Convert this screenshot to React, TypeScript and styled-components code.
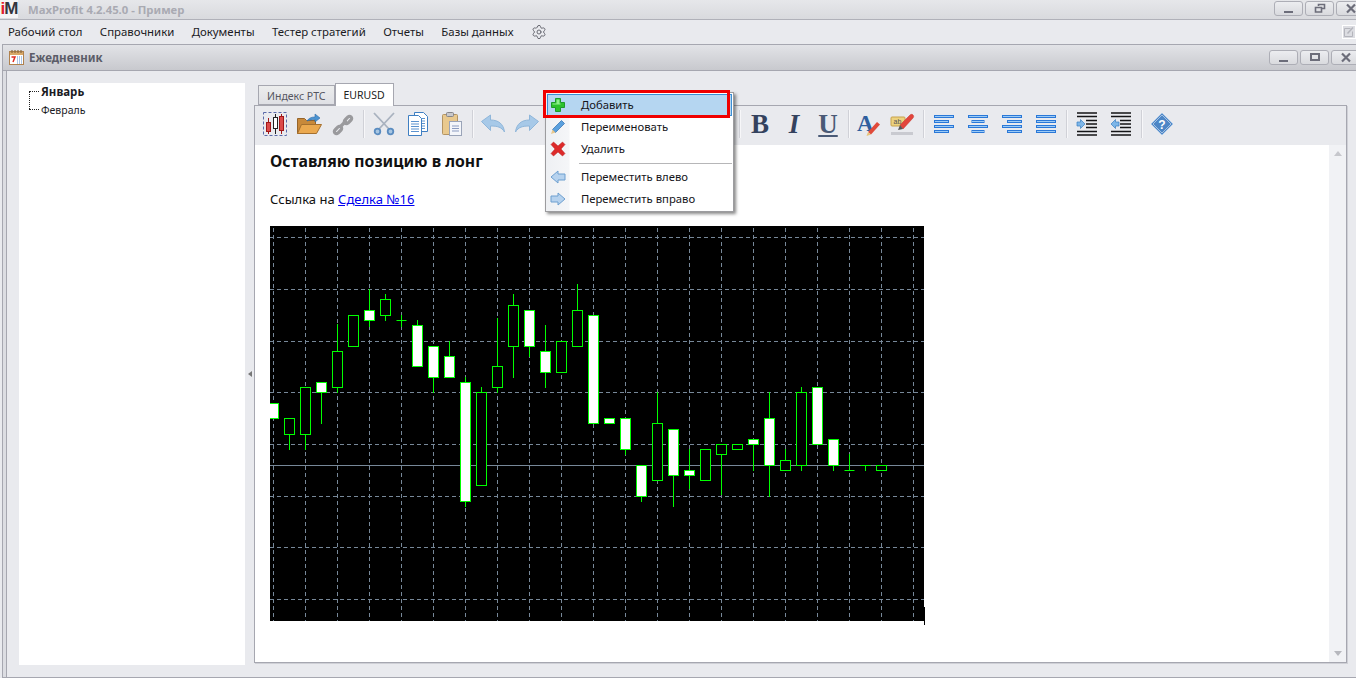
import * as React from "react";
import styled, { createGlobalStyle } from "styled-components";
import { Settings } from "lucide-react";

const UI_FONT = `"Noto Sans", "Open Sans", sans-serif`;
const BORDER = "#a6a7b0";
const GREEN = "#00ff00";
const GRID = "#778899";

const GlobalStyle = createGlobalStyle`
  html, body { margin: 0; padding: 0; background: #e9eaee; }
  * { box-sizing: border-box; }
`;

const Root = styled.div`
  position: relative;
  width: 1356px;
  height: 678px;
  display: flex;
  flex-direction: column;
  overflow: hidden;
  background: #e9eaee;
  font-family: ${UI_FONT};
  color: #1b1b1f;
`;

const TitleBar = styled.div`
  height: 20px;
  flex: none;
  display: flex;
  align-items: flex-start;
  border-bottom: 1px solid #b0b1b9;
  background: linear-gradient(#e6e7ea, #d9dade);
`;

const Logo = styled.div`
  width: 18px;
  height: 18px;
  flex: none;
  display: flex;
  justify-content: center;
  align-items: center;
  background: #f4f4f5;
  font: bold 17px/18px "Liberation Sans", sans-serif;
  letter-spacing: -1px;
`;

const LogoI = styled.span`
  color: #e2202c;
`;

const LogoM = styled.span`
  color: #33363f;
`;

const AppTitle = styled.div`
  margin-left: 10px;
  font-size: 11.3px;
  font-weight: 700;
  line-height: 19px;
  color: #a9aab2;
  flex: 1;
`;

const CaptionButtons = styled.div<{ $pad: number; $bleed: number }>`
  display: flex;
  flex: none;
  gap: 2px;
  padding-top: ${(p) => p.$pad}px;
  margin-right: -${(p) => p.$bleed}px;
`;

const CaptionButton = styled.div`
  width: 29px;
  height: 15px;
  flex: none;
  display: flex;
  align-items: center;
  justify-content: center;
  border: 1px solid #adaeb6;
  border-radius: 3px;
  background: linear-gradient(#ecedf0, #d9dade);
`;

const MenuBar = styled.div`
  height: 24px;
  flex: none;
  display: flex;
  align-items: center;
  gap: 17.4px;
  padding-left: 8px;
  font-size: 11.4px;
`;

const MenuEntry = styled.span`
  line-height: 24px;
  white-space: nowrap;
`;

const GearSlot = styled.span`
  display: flex;
  color: #62636c;
`;

const DockNote = styled.span`
  display: flex;
  margin-left: auto;
  width: 14px;
  height: 14px;
  border: 1px solid #fff;
  background: #dcdde2;
`;

const Window = styled.div`
  flex: 1;
  min-height: 0;
  margin-left: 2px;
  display: flex;
  flex-direction: column;
  border-top: 1px solid ${BORDER};
  border-left: 1px solid ${BORDER};
  border-bottom: 1px solid ${BORDER};
  background: #dcdde2;
`;

const WindowTitle = styled.div`
  height: 26px;
  flex: none;
  display: flex;
  align-items: flex-start;
  padding-left: 6px;
  border-bottom: 1px solid ${BORDER};
  background: linear-gradient(#e2e3e7, #c8c9ce);
`;

const WindowIcon = styled.span`
  display: flex;
  margin-top: 4px;
  flex: none;
`;

const WindowName = styled.span`
  flex: 1;
  margin-left: 4px;
  font-size: 11.5px;
  font-weight: 700;
  line-height: 25px;
  color: #5b5c68;
`;

const WindowBody = styled.div`
  flex: 1;
  min-height: 0;
  margin-left: 3px;
  display: flex;
  padding: 12px 9px 12px 12px;
  border-left: 1px solid ${BORDER};
  background: #e9eaee;
`;

const TreePanel = styled.div`
  width: 226px;
  flex: none;
  padding: 0 0 0 10px;
  background: #fff;
`;

const TreeList = styled.div`
  position: relative;
  margin-top: -1px;
  &::before {
    content: "";
    position: absolute;
    left: 0;
    top: 9px;
    height: 18px;
    border-left: 1px dotted #222;
  }
`;

const TreeNode = styled.div<{ $bold?: boolean }>`
  display: flex;
  align-items: center;
  height: 18px;
  padding-top: ${(p) => (p.$bold ? 0 : 1)}px;
  font-size: ${(p) => (p.$bold ? 11.5 : 10.5)}px;
  font-weight: ${(p) => (p.$bold ? 700 : 400)};
  &::before {
    content: "";
    width: 10px;
    margin-right: 2px;
    border-top: 1px dotted #222;
  }
`;

const Splitter = styled.div`
  width: 9px;
  flex: none;
  display: flex;
  align-items: center;
  justify-content: center;
  &::before {
    content: "";
    border-style: solid;
    border-width: 3px 4px 3px 0;
    border-color: transparent #777 transparent transparent;
  }
`;

const Editor = styled.div`
  flex: 1;
  min-width: 0;
  display: flex;
  flex-direction: column;
  margin-bottom: 2px;
`;

const TabRow = styled.div`
  height: 22px;
  flex: none;
  display: flex;
  align-items: flex-end;
  padding-left: 4px;
`;

const Tab = styled.div<{ $active?: boolean }>`
  height: ${(p) => (p.$active ? 23 : 20)}px;
  margin-bottom: ${(p) => (p.$active ? -1 : 0)}px;
  padding: 0 8px;
  position: relative;
  border: 1px solid ${BORDER};
  border-bottom: ${(p) => (p.$active ? "none" : `1px solid ${BORDER}`)};
  background: ${(p) => (p.$active ? "#fff" : "linear-gradient(#eceded, #dfe0e5)")};
  color: ${(p) => (p.$active ? "#222" : "#55565f")};
  font-size: 10.5px;
  line-height: ${(p) => (p.$active ? 23 : 20)}px;
  white-space: nowrap;
`;

const Panel = styled.div`
  flex: 1;
  min-height: 0;
  display: flex;
  flex-direction: column;
  border: 1px solid ${BORDER};
  box-shadow: 1px 1px 0 #cfd0d6;
`;

const Toolbar = styled.div`
  height: 39px;
  flex: none;
  display: flex;
  align-items: center;
  padding: 0 0 3px 3px;
  background: #e9eaee;
`;

const ToolButton = styled.div`
  width: 34px;
  height: 34px;
  flex: none;
  display: flex;
  align-items: center;
  justify-content: center;
`;

const ToolSep = styled.div`
  width: 1px;
  height: 28px;
  flex: none;
  margin: 0 3px;
  background: #d0d1d7;
  box-shadow: 1px 0 0 #f7f7f9;
`;

const ToolGap = styled.div`
  width: 192px;
  flex: none;
`;

const Letter = styled.span<{ $italic?: boolean; $under?: boolean }>`
  font-family: "Liberation Serif", serif;
  font-weight: 700;
  font-size: 27px;
  line-height: 28px;
  color: ${(p) => (p.$under ? "#4a5a76" : "#34425e")};
  font-style: ${(p) => (p.$italic ? "italic" : "normal")};
  text-decoration: ${(p) => (p.$under ? "underline" : "none")};
  text-decoration-thickness: 2px;
  text-underline-offset: 2px;
`;

const Content = styled.div`
  flex: 1;
  min-height: 0;
  display: flex;
  background: #fff;
`;

const Doc = styled.div`
  flex: 1;
  min-width: 0;
  padding: 5px 0 0 15px;
`;

const Heading = styled.h1`
  margin: 0;
  font-size: 15.8px;
  font-weight: 700;
  line-height: 22px;
  color: #111;
`;

const Para = styled.p`
  margin: 18px 0 18px;
  font-size: 13px;
  line-height: 18px;
  color: #111;
`;

const DocLink = styled.a`
  color: #0000ee;
  text-decoration: underline;
`;

const Scrollbar = styled.div`
  width: 17px;
  flex: none;
  display: flex;
  flex-direction: column;
  justify-content: space-between;
  align-items: center;
  padding: 6px 0;
  background: #f1f2f5;
`;

const ScrollArrow = styled.span<{ $down?: boolean }>`
  width: 0;
  height: 0;
  border-left: 4px solid transparent;
  border-right: 4px solid transparent;
  ${(p) => (p.$down ? "border-top: 5px solid #b6b7bd;" : "border-bottom: 5px solid #c6c7cc;")}
`;

const Menu = styled.div`
  position: absolute;
  left: 545px;
  top: 92px;
  width: 189px;
  padding: 1px;
  border: 1px solid #9c9c9f;
  background: linear-gradient(90deg, #eef0f3 0, #f5f6f8 23px, #fff 24px);
  box-shadow: 2px 2px 3px rgba(40, 40, 40, 0.55);
  font-size: 11.3px;
`;

const MenuItem = styled.div<{ $active?: boolean }>`
  height: 22px;
  display: flex;
  align-items: center;
  border: 1px solid ${(p) => (p.$active ? "#3b8ed4" : "transparent")};
  background: ${(p) => (p.$active ? "#b5d6f1" : "transparent")};
  color: #15151a;
`;

const MenuLabel = styled.span`
  line-height: 18px;
  padding-bottom: 1px;
`;

const MenuIcon = styled.span`
  width: 33px;
  flex: none;
  display: flex;
  justify-content: center;
  padding-right: 13px;
`;

const MenuDivider = styled.div`
  height: 1px;
  margin: 3px 0 2px 32px;
  background: #b6b6b8;
`;

const RedFrame = styled.div`
  position: absolute;
  left: -3px;
  top: -3px;
  width: 187px;
  height: 28px;
  border: 3px solid #f00000;
  pointer-events: none;
`;

/* ---- drawings ---- */

const CaptionGlyph = ({ kind }: { kind: "min" | "max" | "restore" | "close" }) => (
  <svg width="14" height="11" viewBox="0 0 14 11" fill="none" stroke="#6c6d7a">
    {kind === "min" && <path d="M2 9h9" strokeWidth="2" />}
    {kind === "max" && <rect x="3" y="2" width="8" height="6" strokeWidth="2" />}
    {kind === "restore" && (
      <path d="M5.5 3V1.5h6v4H9M2.5 4.5h6v4.500h-6z" strokeWidth="1.6" />
    )}
    {kind === "close" && <path d="M3 1.500l8 8M11 1.500l-8 8" strokeWidth="2.200" />}
  </svg>
);

const NoteGlyph = () => (
  <svg width="12" height="12" viewBox="0 0 12 12" fill="none" stroke="#b4b5bc">
    <path d="M1.500 2.500h6M1.500 2.500v8h8v-5" />
    <path d="M4.500 7.500L10 1.500" strokeWidth="1.500" />
  </svg>
);

const CalendarIcon = () => (
  <svg width="16" height="16" viewBox="0 0 16 16">
    <rect x="0.500" y="2.500" width="14" height="13" fill="#fff" stroke="#b0814d" />
    <rect x="1" y="3" width="13" height="3" fill="#d8a868" />
    <path d="M3 1v3M6 1v3M9 1v3M12 1v3" stroke="#8a6a40" strokeWidth="1.200" />
    <path d="M2.500 8h3.500l-2 5" stroke="#e02a20" strokeWidth="1.500" fill="none" />
    <path d="M8 8h5M8 10h5M8 12h5M8 14h5" stroke="#5b8fd0" strokeDasharray="1 1" />
  </svg>
);

const CandlesIcon = () => (
  <svg width="26" height="26" viewBox="0 0 26 26">
    <rect x="1.500" y="1.500" width="23" height="23" fill="none" stroke="#5a6aa8" strokeDasharray="3 2" />
    <path d="M6.500 7v16" stroke="#a01818" />
    <rect x="4.500" y="11.500" width="4" height="9" fill="#dc4a4a" stroke="#a01818" />
    <path d="M13.500 3v20" stroke="#222" />
    <rect x="11.500" y="6.500" width="4" height="11" fill="#fff" stroke="#222" />
    <path d="M19.500 3v20" stroke="#a01818" />
    <rect x="17.500" y="5.500" width="4" height="14" fill="#dc4a4a" stroke="#a01818" />
  </svg>
);

const FolderIcon = () => (
  <svg width="26" height="26" viewBox="0 0 26 26">
    <path d="M1.500 7.500h7l2 2h9v13h-18z" fill="#c8893a" stroke="#96642a" />
    <path d="M1.500 22.500l4-9h20l-5 9z" fill="#eba94f" stroke="#a5702f" />
    <path d="M11 10c2-3 4-4 8-4V3l5 4-5 4V8.500c-3 0-5 .5-8 1.500z" fill="#4b93d1" stroke="#2d6ca8" strokeWidth="0.600" />
  </svg>
);

const LinkIcon = () => (
  <svg width="26" height="26" viewBox="0 0 26 26" fill="none">
    <g stroke="#9a9a9d" strokeWidth="3.200" strokeLinecap="round">
      <path d="M5 19l3-3a2 2 0 0 1 3 0l0 0a2 2 0 0 1 0 3l-3 3a2 2 0 0 1-3 0a2 2 0 0 1 0-3z" />
      <path d="M15 9l3-3a2 2 0 0 1 3 0l0 0a2 2 0 0 1 0 3l-3 3a2 2 0 0 1-3 0a2 2 0 0 1 0-3z" />
      <path d="M10.500 15.500l5-5" />
    </g>
  </svg>
);

const ScissorsIcon = () => (
  <svg width="26" height="26" viewBox="0 0 26 26" fill="none">
    <path d="M3 2l15 16M23 2L8 18" stroke="#a9b2bf" strokeWidth="1.800" />
    <circle cx="6.500" cy="20.500" r="2.800" fill="#a8c6e2" stroke="#5a8cc0" strokeWidth="1.800" />
    <circle cx="19.500" cy="20.500" r="2.800" fill="#a8c6e2" stroke="#5a8cc0" strokeWidth="1.800" />
  </svg>
);

const DocLines = ({ x, y, n, w }: { x: number; y: number; n: number; w: number }) => (
  <path
    d={Array.from({ length: n }, (_, i) => `M${x} ${y + i * 2.5}h${w}`).join("")}
    stroke="#5c93cf"
  />
);

const CopyIcon = () => (
  <svg width="26" height="26" viewBox="0 0 26 26">
    <path d="M9.500 1.500h9l4 4v15h-13z" fill="#fff" stroke="#3f7fc2" />
    <DocLines x={12} y={7.500} n={5} w={8} />
    <path d="M3.500 4.500h10l3 3v17h-13z" fill="#fff" stroke="#3f7fc2" />
    <DocLines x={6} y={10.500} n={5} w={8} />
  </svg>
);

const PasteIcon = () => (
  <svg width="26" height="26" viewBox="0 0 26 26">
    <rect x="3.500" y="3.500" width="15" height="20" rx="1" fill="#e9c98e" stroke="#b39463" />
    <rect x="7.500" y="1.500" width="7" height="4" rx="1" fill="#c9c9cc" stroke="#85858a" />
    <rect x="10.500" y="10.500" width="12" height="14" fill="#f4f6fa" stroke="#9aa4b8" />
    <path d="M13 15h7M13 17.500h7M13 20h7" stroke="#8b9bc0" />
  </svg>
);

const TurnArrow = ({ flip }: { flip?: boolean }) => (
  <svg width="26" height="26" viewBox="0 0 26 26">
    <path
      d="M1.500 10.500L10.500 4v5c8 0 13 4 14 12-3-5-7-6-14-6v4.500z"
      fill="#a7c9e8"
      stroke="#8fb6da"
      transform={flip ? "matrix(-1 0 0 1 26 0)" : undefined}
    />
  </svg>
);

const FontColorIcon = () => (
  <svg width="26" height="26" viewBox="0 0 26 26" overflow="visible">
    <text x="1" y="20" fontFamily="Liberation Serif, serif" fontWeight="700" fontSize="23" fill="#2f5f9e">A</text>
    <path d="M12 21l9-10 3 2.500-9 10z" fill="#e04a3a" />
    <path d="M10.500 25l1.500-4 3 2.500z" fill="#e7c27a" />
  </svg>
);

const MarkerIcon = () => (
  <svg width="26" height="26" viewBox="0 0 26 26">
    <rect x="1" y="6" width="14" height="9" rx="1" fill="#ecd27f" stroke="#c7a24d" />
    <text x="3.500" y="13" fontFamily="Liberation Sans, sans-serif" fontSize="7" fill="#555">ab</text>
    <path d="M10 14L20 4c2-2 5 1 3 3L13 18z" fill="#e2453c" stroke="#c4302a" strokeWidth="0.500" />
    <path d="M8 19l2-5 3 4z" fill="#555" />
    <rect x="1" y="21" width="22" height="3" fill="#c9cad0" />
  </svg>
);

const AlignIcon = ({ mode }: { mode: "left" | "center" | "right" | "full" }) => {
  const short = mode === "full" ? 20 : mode === "center" ? 13 : 15;
  const bar = (y: number, w: number) => {
    const x = mode === "left" || mode === "full" ? 2 : mode === "right" ? 22 - w : 12 - w / 2;
    return <rect key={y} x={x + 0.5} y={y + 0.5} width={w - 1} height={2} fill="#9ccbf6" stroke="#2a78d8" />;
  };
  return (
    <svg width="24" height="24" viewBox="0 0 24 24">
      {[3, 8, 13, 18].map((y, i) => bar(y, i % 2 ? short : 20))}
    </svg>
  );
};

const IndentIcon = ({ out }: { out?: boolean }) => (
  <svg width="24" height="26" viewBox="0 0 24 26">
    <path d="M2 2h20M2 5.500h20M11 9.500h11M11 13h11M11 16.500h11M2 20.500h20M2 24h20" stroke="#141416" strokeWidth="1.500" />
    <path
      d={out ? "M2 13l4.500-4.500v2.500H10v4H6.500v2.500z" : "M10 13L5.500 8.500V11H2v4h3.500v2.500z"}
      fill="#7db6e8"
      stroke="#3a7fc2"
      strokeWidth="0.700"
    />
  </svg>
);

const HelpIcon = () => (
  <svg width="24" height="24" viewBox="0 0 24 24">
    <path d="M12 1l11 11-11 11L1 12z" fill="#4d86c6" stroke="#a5c4e6" />
    <path d="M12 3l9 9-9 9-9-9z" fill="none" stroke="#e0e9f4" strokeWidth="0.600" />
    <text x="12" y="16.500" textAnchor="middle" fontFamily="Liberation Sans, sans-serif" fontWeight="700" fontSize="12" fill="#fff">?</text>
  </svg>
);

const PlusIcon = () => (
  <svg width="16" height="16" viewBox="0 0 16 16">
    <path d="M5.500 1.500h5v4h4v5h-4v4h-5v-4h-4v-5h4z" fill="#2cc12c" stroke="#1d9a2a" />
    <path d="M6.500 2.500h3v4h-3zM2.500 6.500h8v1h-8z" fill="#8ef08e" />
  </svg>
);

const PencilIcon = () => (
  <svg width="16" height="16" viewBox="0 0 16 16">
    <path d="M2.500 10.500L11.500 1.500l3 3-9 9z" fill="#5aa0de" stroke="#2f6fae" strokeWidth="0.700" />
    <path d="M2.500 10.500l3 3L1 15z" fill="#e9c98e" />
  </svg>
);

const CrossIcon = () => (
  <svg width="16" height="16" viewBox="0 0 16 16">
    <path d="M3.500 1l4.500 4 4.500-4 2.500 2.500-4 4.500 4 4.500-2.500 2.500L8 11l-4.500 4L1 12.500 5 8 1 3.500z" fill="#dd2a2a" stroke="#b51c1c" strokeWidth="0.500" />
  </svg>
);

const SideArrow = ({ right }: { right?: boolean }) => (
  <svg width="16" height="14" viewBox="0 0 16 14">
    <path
      d="M1 7l7-6v3h7v6H8v3z"
      fill="#b6d2ee"
      stroke="#6d9fd0"
      transform={right ? "matrix(-1 0 0 1 16 0)" : undefined}
    />
  </svg>
);

type Candle = [number, number, number, number?, number?];

/* open top, bottom, filled, wick top, wick bottom - y in page pixels */
const CANDLES: Candle[] = [
  [403, 418, 1],
  [418, 434, 0, undefined, 449],
  [387, 434, 0, undefined, 449],
  [382, 392, 1, undefined, 423],
  [351, 387, 0, 324, 392],
  [315, 346, 0],
  [310, 320, 1, 289, 326],
  [299, 315, 0, 294, 320],
  [320, 320, 0, 315, 326],
  [325, 366, 1, 320],
  [346, 377, 1, undefined, 392],
  [356, 377, 1, 341],
  [382, 501, 1, 377, 506],
  [392, 485, 0, 387],
  [366, 387, 0, 318, 392],
  [305, 346, 0, 294, 377],
  [310, 346, 1, undefined, 356],
  [351, 372, 1, 325, 387],
  [341, 372, 0],
  [310, 346, 0, 284],
  [315, 423, 1],
  [418, 423, 1],
  [418, 449, 1, undefined, 454],
  [465, 496, 1, undefined, 501],
  [423, 480, 0, 392],
  [429, 475, 1, undefined, 506],
  [470, 475, 1, 449, 488],
  [449, 480, 0],
  [444, 454, 0, undefined, 494],
  [444, 449, 0],
  [439, 444, 1, undefined, 470],
  [418, 465, 1, 392, 496],
  [460, 470, 0, 449],
  [392, 465, 0, 387, 470],
  [387, 444, 1],
  [439, 465, 1, undefined, 470],
  [470, 470, 0, 454],
  [465, 465, 0, undefined, 470],
  [465, 470, 0],
];

const GRID_ROWS = [237, 289, 341, 392, 444, 496, 547, 599];
const TOP = 226;

const ChartSvg = styled.svg`
  display: block;
`;

const Chart = () => (
  <ChartSvg width="656" height="400" viewBox="0 0 656 400">
    <rect x="0" y="0" width="654" height="395" fill="#000" />
    <rect x="654" y="381" width="1" height="18" fill="#000" />
    {GRID_ROWS.map((y) => (
      <path key={y} d={`M0 ${y - TOP + 0.5}H654`} stroke={GRID} strokeDasharray="4 3" />
    ))}
    {Array.from({ length: 21 }, (_, i) => (
      <path key={i} d={`M${3.5 + i * 32} 2V395`} stroke={GRID} strokeDasharray="4 3" />
    ))}
    <path d={`M0 ${465 - TOP + 0.5}H654`} stroke={GRID} />
    {CANDLES.map(([top, bottom, filled, wickTop, wickBottom], i) => {
      const cx = 3.5 + i * 16;
      const y = top - TOP + 0.5;
      const h = bottom - top;
      return (
        <g key={i} stroke={GREEN}>
          {wickTop !== undefined && <path d={`M${cx} ${wickTop - TOP}V${y}`} />}
          {wickBottom !== undefined && <path d={`M${cx} ${y + h}V${wickBottom - TOP + 1}`} />}
          {h === 0 ? (
            <path d={`M${cx - 5} ${y}h10`} />
          ) : (
            <rect x={cx - 5} y={y} width="10" height={h} fill={filled ? "#fff" : "#000"} />
          )}
        </g>
      );
    })}
  </ChartSvg>
);

export default function App() {
  return (
    <Root>
      <GlobalStyle />
      <TitleBar>
        <Logo>
          <LogoI>i</LogoI>
          <LogoM>M</LogoM>
        </Logo>
        <AppTitle>MaxProfit 4.2.45.0 - Пример</AppTitle>
        <CaptionButtons $pad={1} $bleed={9}>
          <CaptionButton><CaptionGlyph kind="min" /></CaptionButton>
          <CaptionButton><CaptionGlyph kind="restore" /></CaptionButton>
          <CaptionButton><CaptionGlyph kind="close" /></CaptionButton>
        </CaptionButtons>
      </TitleBar>
      <MenuBar>
        <MenuEntry>Рабочий стол</MenuEntry>
        <MenuEntry>Справочники</MenuEntry>
        <MenuEntry>Документы</MenuEntry>
        <MenuEntry>Тестер стратегий</MenuEntry>
        <MenuEntry>Отчеты</MenuEntry>
        <MenuEntry>Базы данных</MenuEntry>
        <GearSlot><Settings size={16} strokeWidth={1.4} /></GearSlot>
        <DockNote><NoteGlyph /></DockNote>
      </MenuBar>
      <Window>
        <WindowTitle>
          <WindowIcon><CalendarIcon /></WindowIcon>
          <WindowName>Ежедневник</WindowName>
          <CaptionButtons $pad={5} $bleed={4}>
            <CaptionButton><CaptionGlyph kind="min" /></CaptionButton>
            <CaptionButton><CaptionGlyph kind="max" /></CaptionButton>
            <CaptionButton><CaptionGlyph kind="close" /></CaptionButton>
          </CaptionButtons>
        </WindowTitle>
        <WindowBody>
          <TreePanel>
            <TreeList>
              <TreeNode $bold>Январь</TreeNode>
              <TreeNode>Февраль</TreeNode>
            </TreeList>
          </TreePanel>
          <Splitter />
          <Editor>
            <TabRow>
              <Tab>Индекс РТС</Tab>
              <Tab $active>EURUSD</Tab>
            </TabRow>
            <Panel>
              <Toolbar>
                <ToolButton><CandlesIcon /></ToolButton>
                <ToolButton><FolderIcon /></ToolButton>
                <ToolButton><LinkIcon /></ToolButton>
                <ToolSep />
                <ToolButton><ScissorsIcon /></ToolButton>
                <ToolButton><CopyIcon /></ToolButton>
                <ToolButton><PasteIcon /></ToolButton>
                <ToolSep />
                <ToolButton><TurnArrow /></ToolButton>
                <ToolButton><TurnArrow flip /></ToolButton>
                <ToolGap />
                <ToolSep />
                <ToolButton><Letter>B</Letter></ToolButton>
                <ToolButton><Letter $italic>I</Letter></ToolButton>
                <ToolButton><Letter $under>U</Letter></ToolButton>
                <ToolSep />
                <ToolButton><FontColorIcon /></ToolButton>
                <ToolButton><MarkerIcon /></ToolButton>
                <ToolSep />
                <ToolButton><AlignIcon mode="left" /></ToolButton>
                <ToolButton><AlignIcon mode="center" /></ToolButton>
                <ToolButton><AlignIcon mode="right" /></ToolButton>
                <ToolButton><AlignIcon mode="full" /></ToolButton>
                <ToolSep />
                <ToolButton><IndentIcon /></ToolButton>
                <ToolButton><IndentIcon out /></ToolButton>
                <ToolSep />
                <ToolButton><HelpIcon /></ToolButton>
              </Toolbar>
              <Content>
                <Doc>
                  <Heading>Оставляю позицию в лонг</Heading>
                  <Para>
                    Ссылка на <DocLink href="#">Сделка №16</DocLink>
                  </Para>
                  <Chart />
                </Doc>
                <Scrollbar>
                  <ScrollArrow />
                  <ScrollArrow $down />
                </Scrollbar>
              </Content>
            </Panel>
          </Editor>
        </WindowBody>
      </Window>
      <Menu>
        <MenuItem $active><MenuIcon><PlusIcon /></MenuIcon><MenuLabel>Добавить</MenuLabel></MenuItem>
        <MenuItem><MenuIcon><PencilIcon /></MenuIcon><MenuLabel>Переименовать</MenuLabel></MenuItem>
        <MenuItem><MenuIcon><CrossIcon /></MenuIcon><MenuLabel>Удалить</MenuLabel></MenuItem>
        <MenuDivider />
        <MenuItem><MenuIcon><SideArrow /></MenuIcon><MenuLabel>Переместить влево</MenuLabel></MenuItem>
        <MenuItem><MenuIcon><SideArrow right /></MenuIcon><MenuLabel>Переместить вправо</MenuLabel></MenuItem>
        <RedFrame />
      </Menu>
    </Root>
  );
}
